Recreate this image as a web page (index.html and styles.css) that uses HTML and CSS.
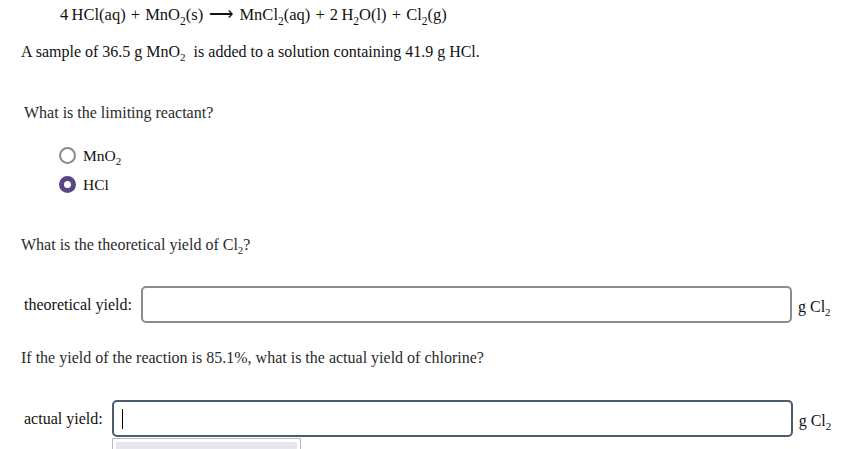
FILE: index.html
```html
<!DOCTYPE html>
<html lang="en">

<head>
    <meta charset="UTF-8">
    <meta name="viewport" content="width=device-width, initial-scale=1.0">
    <title>Limiting reactant</title>
    <link rel="stylesheet" href="styles.css">
</head>

<body>
    <div class="page">
        <!-- 反应方程式 -->
        <div class="equation">4&thinsp;HCl(aq) <span class="op">+</span> MnO<sub>2</sub>(s) <span class="arrow">&#10230;</span> MnCl<sub>2</sub>(aq) <span class="op">+</span> 2&thinsp;H<sub>2</sub>O(l) <span class="op">+</span> Cl<sub>2</sub>(g)</div>
        <p class="intro">A sample of 36.5 g MnO<sub>2</sub>&nbsp; is added to a solution containing 41.9 g HCl.</p>

        <p class="question q1">What is the limiting reactant?</p>
        <ul class="choices">
            <li><span class="radio"></span><span>MnO<sub>2</sub></span></li>
            <li><span class="radio checked"></span><span>HCl</span></li>
        </ul>

        <p class="question q2">What is the theoretical yield of Cl<sub>2</sub>?</p>
        <div class="answer a1">
            <label>theoretical yield:</label>
            <div class="box"></div>
            <span class="unit">g Cl<sub>2</sub></span>
        </div>

        <p class="question q3">If the yield of the reaction is 85.1%, what is the actual yield of chlorine?</p>
        <div class="answer a2">
            <label>actual yield:</label>
            <div class="box active"><span class="caret"></span>
                <div class="dropdown"><div class="dropdown-inner"></div></div>
            </div>
            <span class="unit">g Cl<sub>2</sub></span>
        </div>
    </div>
</body>

</html>
```

FILE: styles.css
```css
* {
    margin: 0;
    padding: 0;
}

html,
body {
    height: 449px;
    overflow: hidden;
}

body {
    font-family: "Liberation Serif", "Times New Roman", serif;
    font-size: 16px;
    color: #111;
    background: #fff;
}

sub {
    font-size: 11px;
    vertical-align: -4px;
    line-height: 0;
}

.page {
    width: 846px;
}

.equation {
    padding-left: 60px;
    padding-top: 4px;
    height: 26px;
    line-height: 22px;
    font-size: 16.5px;
}

.equation sub {
    font-size: 11.5px;
    vertical-align: -5px;
}

.op {
    margin: 0 1px;
}

.arrow {
    display: inline-block;
    margin: 0 2px;
}

.intro {
    margin-top: 11px;
    padding-left: 21px;
    line-height: 22px;
}

.question {
    line-height: 22px;
    color: #2a2a2a;
}

.q1 {
    margin-top: 39px;
    padding-left: 24px;
}

.choices {
    list-style: none;
    margin-top: 17px;
    padding-left: 59px;
}

.choices li {
    display: flex;
    align-items: center;
    height: 29px;
    font-size: 15.5px;
}

.radio {
    width: 17px;
    height: 17px;
    box-sizing: border-box;
    border: 2px solid #8a8a8a;
    border-radius: 50%;
    margin-right: 7px;
}

.radio.checked {
    border: 5px solid #5a4585;
}

.q2 {
    margin-top: 35px;
    padding-left: 21px;
}

.answer {
    display: flex;
    align-items: center;
    padding-left: 24px;
}

.answer label {
    margin-right: 9px;
}

.box {
    position: relative;
    flex: 0 0 auto;
    height: 37px;
    box-sizing: border-box;
    border: 2px solid #8c8c8c;
    border-radius: 5px;
    background: #fff;
}

.a1 {
    margin-top: 30px;
}

.a1 .box {
    width: 651px;
}

.a2 {
    margin-top: 31px;
}

.a2 .box {
    width: 681px;
    border-color: #4d5b6e;
}

.unit {
    margin-left: 6px;
    margin-top: 4px;
}

.caret {
    position: absolute;
    left: 8px;
    top: 7px;
    width: 1px;
    height: 20px;
    background: #000;
}

.q3 {
    margin-top: 24px;
    padding-left: 21px;
}

.dropdown {
    position: absolute;
    z-index: 5;
    left: -2px;
    top: 36px;
    width: 189px;
    height: 20px;
    box-sizing: border-box;
    border: 1px solid #b8b8c0;
    background: #fff;
    padding: 3px 3px 0;
}

.dropdown-inner {
    height: 100%;
    background: #e6e6ec;
}
```
